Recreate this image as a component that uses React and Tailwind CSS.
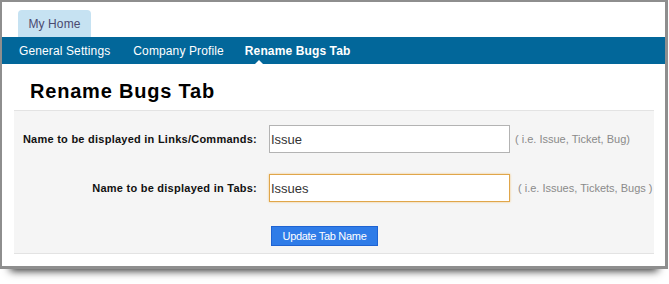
export default function App() {
  return (
    <div className="w-[669px] h-[284px] bg-white font-['Liberation_Sans',Arial,sans-serif] relative">
      <div className="w-[668px] h-[269px] border-l-2 border-t-2 border-r-[3px] border-b-[3px] border-[#8e8e8e] bg-white shadow-[0_12px_8px_-10px_rgba(0,0,0,0.8)] flex flex-col">
        <div className="h-[35px] pt-[8px] pl-[16px] shrink-0">
          <div className="w-[73px] h-[27px] bg-[#c6e2f2] rounded-t-[4px] flex items-center justify-center text-[12px] tracking-[0.1px] text-[#4a4a70]">
            My Home
          </div>
        </div>
        <nav className="relative h-[27px] shrink-0 bg-[#02679a] flex items-center pl-[17px] text-[12px] tracking-[0.12px] text-white">
          <span>General Settings</span>
          <span className="ml-[23px]">Company Profile</span>
          <span className="ml-[21px] font-bold">Rename Bugs Tab</span>
          <span className="absolute left-[253px] bottom-0 w-0 h-0 border-l-[4px] border-r-[4px] border-b-[4px] border-l-transparent border-r-transparent border-b-white" />
        </nav>
        <h1 className="mt-[15px] pl-[28px] text-[20px] leading-[24px] font-bold tracking-[0.8px] text-black">
          Rename Bugs Tab
        </h1>
        <div className="mt-[7px] ml-[12px] w-[640px] bg-[#f5f5f5] border-t border-b border-[#e3e3e3] pt-[14px] pb-[7px]">
          <div className="flex items-center h-[28px]">
            <label className="w-[243px] text-right text-[11px] font-bold tracking-[0.25px] text-[#111]">
              Name to be displayed in Links/Commands:
            </label>
            <input
              readOnly
              value="Issue"
              className="ml-[12px] w-[241px] h-[28px] border border-[#b3b3b3] bg-white px-[1px] text-[13px] text-[#333] outline-none font-['Liberation_Sans',Arial,sans-serif]"
            />
            <span className="ml-[5px] text-[11px] text-[#8a8a8a]">( i.e. Issue, Ticket, Bug)</span>
          </div>
          <div className="flex items-center h-[28px] mt-[21px]">
            <label className="w-[243px] text-right text-[11px] font-bold tracking-[0.25px] text-[#111]">
              Name to be displayed in Tabs:
            </label>
            <input
              readOnly
              value="Issues"
              className="ml-[12px] w-[241px] h-[28px] border border-[#e0a64a] shadow-[0_0_2px_#f2c57a] bg-white px-[1px] text-[13px] text-[#333] outline-none font-['Liberation_Sans',Arial,sans-serif]"
            />
            <span className="ml-[8px] text-[11px] text-[#8a8a8a]">( i.e. Issues, Tickets, Bugs )</span>
          </div>
          <div className="mt-[24px] pl-[257px] flex">
            <button className="block w-[107px] h-[20px] bg-[#2f7ce8] border border-[#1f63d2] text-white text-[11px] tracking-[-0.3px] leading-none font-['Liberation_Sans',Arial,sans-serif]">
              Update Tab Name
            </button>
          </div>
        </div>
      </div>
    </div>
  );
}
